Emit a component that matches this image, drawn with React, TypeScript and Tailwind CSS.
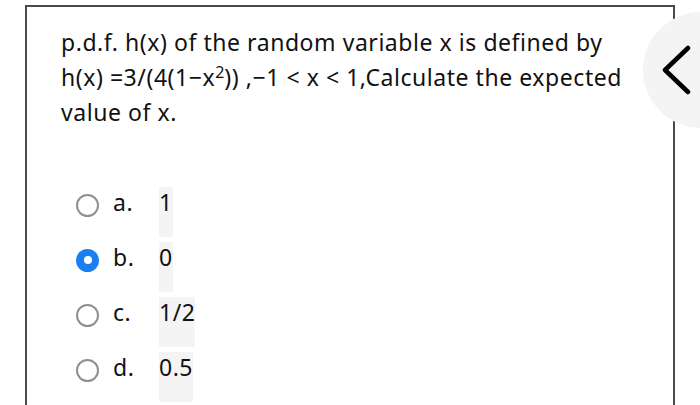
import React from "react";

const options = [
  { key: "a.", value: "1", checked: false },
  { key: "b.", value: "0", checked: true },
  { key: "c.", value: "1/2", checked: false },
  { key: "d.", value: "0.5", checked: false },
];

function Radio({ checked }: { checked: boolean }) {
  if (checked) {
    return (
      <span className="flex h-[23px] w-[23px] items-center justify-center rounded-full bg-[#1a7ff0]">
        <span className="h-[8px] w-[8px] rounded-full bg-white" />
      </span>
    );
  }
  return (
    <span className="h-[23px] w-[23px] rounded-full border-[2.5px] border-[#8f8f8f] bg-white" />
  );
}

export default function App() {
  return (
    <div
      className="relative h-[405px] w-[700px] overflow-hidden bg-white text-[#111]"
      style={{ fontFamily: '"Noto Sans", "Open Sans", sans-serif' }}
    >
      <div className="ml-[25px] mt-[5px] h-[460px] w-[650px] border-2 border-[#4a4a4a] pl-[34px] pr-[20px] pt-[18px]">
        <p className="text-[23px] leading-[35px] tracking-[0.55px] whitespace-nowrap">
          p.d.f. h(x) of the random variable x is defined by
          <br />
          h(x) =3/(4(1−x<sup className="text-[16px] tracking-normal">2</sup>)) ,−1 &lt; x &lt; 1,Calculate the expected
          <br />
          value of x.
        </p>

        <div className="mt-[57px] flex flex-col gap-[5px] pl-[15px]">
          {options.map((o) => (
            <div key={o.key} className="flex h-[50px] items-start">
              <div className="flex h-[30px] w-[37px] items-center pt-[6px]">
                <Radio checked={o.checked} />
              </div>
              <span className="w-[46px] text-[23px] leading-[30px] tracking-[0.5px]">{o.key}</span>
              <span className="h-[50px] bg-[#f4f4f4] text-[23px] leading-[30px] tracking-[0.5px]">{o.value}</span>
            </div>
          ))}
        </div>
      </div>

      <div className="absolute left-[643px] top-[12px] flex h-[116px] w-[116px] items-center rounded-full bg-[#f4f4f4] pl-[17px]">
        <svg width="32" height="50" viewBox="0 0 32 50" fill="none">
          <path d="M28 3 L5 25 L28 47" stroke="#000" strokeWidth="4.5" strokeLinecap="round" strokeLinejoin="round" />
        </svg>
      </div>
    </div>
  );
}
